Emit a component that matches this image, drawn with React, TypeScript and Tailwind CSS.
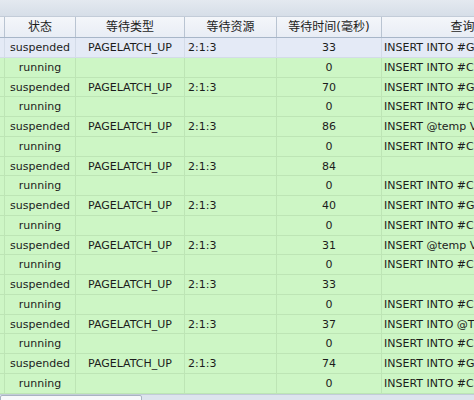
import React from "react"

type Row = { state: string; wait?: string; res?: string; ms: string; query: string }

const rows: Row[] = [
  { state: "suspended", wait: "PAGELATCH_UP", res: "2:1:3", ms: "33", query: "INSERT INTO #GroupTemp" },
  { state: "running", ms: "0", query: "INSERT INTO #CustTemp" },
  { state: "suspended", wait: "PAGELATCH_UP", res: "2:1:3", ms: "70", query: "INSERT INTO #GroupTemp" },
  { state: "running", ms: "0", query: "INSERT INTO #CustTemp" },
  { state: "suspended", wait: "PAGELATCH_UP", res: "2:1:3", ms: "86", query: "INSERT @temp VALUES" },
  { state: "running", ms: "0", query: "INSERT INTO #CustTemp" },
  { state: "suspended", wait: "PAGELATCH_UP", res: "2:1:3", ms: "84", query: "" },
  { state: "running", ms: "0", query: "INSERT INTO #CustTemp" },
  { state: "suspended", wait: "PAGELATCH_UP", res: "2:1:3", ms: "40", query: "INSERT INTO #GroupTemp" },
  { state: "running", ms: "0", query: "INSERT INTO #CustTemp" },
  { state: "suspended", wait: "PAGELATCH_UP", res: "2:1:3", ms: "31", query: "INSERT @temp VALUES" },
  { state: "running", ms: "0", query: "INSERT INTO #CustTemp" },
  { state: "suspended", wait: "PAGELATCH_UP", res: "2:1:3", ms: "33", query: "" },
  { state: "running", ms: "0", query: "INSERT INTO #CustTemp" },
  { state: "suspended", wait: "PAGELATCH_UP", res: "2:1:3", ms: "37", query: "INSERT INTO @Tmp" },
  { state: "running", ms: "0", query: "INSERT INTO #CustTemp" },
  { state: "suspended", wait: "PAGELATCH_UP", res: "2:1:3", ms: "74", query: "INSERT INTO #GroupTemp" },
  { state: "running", ms: "0", query: "INSERT INTO #CustTemp" },
]

const cols = "grid grid-cols-[5px_71px_109px_92px_105px_162px]"
const font = { fontFamily: '"DejaVu Sans", Tahoma, "Noto Sans CJK SC", sans-serif' }

export default function App() {
  return (
    <div className="w-[474px] h-[400px] overflow-hidden bg-[#d9e1ea] text-[#1c1c1c]" style={font}>
      {/* toolbar strip above the grid */}
      <div className="h-[17px] bg-gradient-to-b from-[#e4e9f0] to-[#d6dee8] border-b border-[#c3ccd8]" />

      {/* column headers */}
      <div className={`${cols} h-[21px] bg-gradient-to-b from-[#f4f6fa] to-[#e8edf5] border-b border-[#a7b6c8] text-[12px] leading-[21px]`}>
        {["", "状态", "等待类型", "等待资源", "等待时间(毫秒)", "查询"].map((h, i) => (
          <div key={i} className="border-r border-[#b9c4d2] text-center whitespace-nowrap overflow-hidden">
            {h}
          </div>
        ))}
      </div>

      {/* data rows */}
      {rows.map((r, i) => {
        const sel = i === 0
        const bg = sel ? "bg-[#e4eaf6]" : "bg-[#cdf6c5]"
        const line = sel ? "border-[#d3dbe8]" : "border-[#bde5b5]"
        return (
          <div key={i} className={`${cols} h-[19.76px] ${bg} border-b ${line} text-[11px] leading-[20px]`}>
            <div className={`border-r ${line}`} />
            <div className={`border-r ${line} text-center`}>{r.state}</div>
            <div className={`border-r ${line} text-center`}>{r.wait ?? ""}</div>
            <div className={`border-r ${line} pl-[3px]`}>{r.res ?? ""}</div>
            <div className={`border-r ${line} text-center`}>{r.ms}</div>
            <div className="pl-[2px] whitespace-nowrap overflow-hidden">{r.query}</div>
          </div>
        )
      })}

      {/* horizontal scrollbar */}
      <div className="h-[8px] bg-[#dde4ee] border-t border-[#c2ccd9] flex">
        <div className="w-[142px] h-full bg-[#f7f9fc] border border-[#a9b4c2] rounded-[2px]" />
      </div>
    </div>
  )
}
